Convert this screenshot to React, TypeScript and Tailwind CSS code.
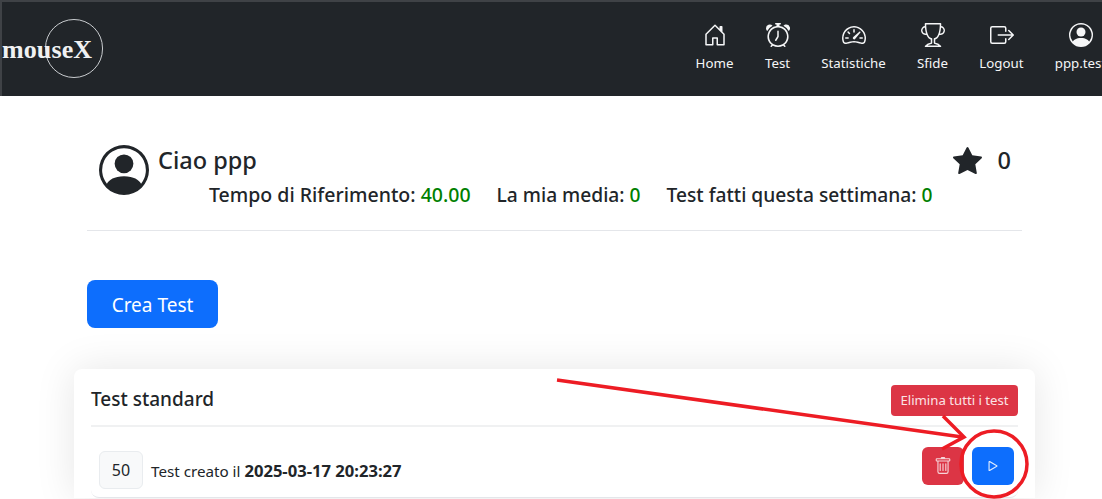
import { BsAlarm, BsBoxArrowRight, BsHouseDoor, BsPersonCircle, BsPlay, BsSpeedometer2, BsStarFill, BsTrash, BsTrophy } from 'react-icons/bs'
import clsx from 'clsx'

const navItems = [
  { label: 'Home', icon: BsHouseDoor, width: 'w-[63px]' },
  { label: 'Test', icon: BsAlarm, width: 'w-[63px]' },
  { label: 'Statistiche', icon: BsSpeedometer2, width: 'w-[89px]' },
  { label: 'Sfide', icon: BsTrophy, width: 'w-[69px]' },
  { label: 'Logout', icon: BsBoxArrowRight, width: 'w-[69px]' },
  { label: 'ppp.test', icon: BsPersonCircle, width: 'w-[89px]' },
]

function Navbar() {
  return (
    <header className="flex h-[96px] shrink-0 items-center justify-between overflow-hidden border-t-2 border-l-2 border-[#3f4246] bg-[#212529]">
      <div className="relative flex h-[59px] w-[100px] items-center">
        <div className="absolute top-[-1px] left-[43px] h-[59px] w-[58px] rounded-full border border-[#c9cccf]" />
        <span className="relative font-['Liberation_Serif',serif] text-[26px] font-bold tracking-[0.1px] text-[#f0f1f2]">mouseX</span>
      </div>
      <nav className="mr-[-23px] flex items-start pb-[4px]">
        {navItems.map(item => (
          <a key={item.label} className={clsx('flex shrink-0 flex-col items-center gap-[7px] text-[13.3px] leading-[18px] text-[#f5f6f7]', item.width)}>
            <item.icon className="size-[24px]" />
            <span>{item.label}</span>
          </a>
        ))}
      </nav>
    </header>
  )
}

function Profile() {
  return (
    <section className="flex h-[135px] items-start border-b border-[#e4e6ea] pt-[49px] pr-[11px] pl-[12px]">
      <BsPersonCircle className="size-[50px] shrink-0 text-[#212529]" />
      <div className="ml-[9px] flex-1">
        <div className="flex items-center justify-between">
          <h1 className="text-[23.5px] leading-[30px] font-medium text-[#212529]">Ciao ppp</h1>
          <div className="flex items-center gap-[16px] text-[#212529]">
            <BsStarFill className="size-[29px]" />
            <span className="text-[23.5px] leading-[30px] font-medium">0</span>
          </div>
        </div>
        <div className="mt-[5px] ml-[51px] flex gap-[26px] text-[19.2px] leading-[30px] font-medium text-[#212529]">
          <span className="text-[19.5px]">Tempo di Riferimento: <span className="text-[#008000]">40.00</span></span>
          <span>La mia media: <span className="text-[#008000]">0</span></span>
          <span>Test fatti questa settimana: <span className="text-[#008000]">0</span></span>
        </div>
      </div>
    </section>
  )
}

function TestCard() {
  return (
    <section className="relative mt-[41px] ml-[-13px] w-[961px] rounded-t-lg bg-white px-[17px] pt-[16px] shadow-[0_0_40px_rgba(0,0,0,0.1)]">
      <h2 className="border-b-2 border-[#f0f1f2] pb-[11px] text-[19px] leading-[29px] font-medium text-[#212529]">Test standard</h2>
      <div className="flex h-[71px] items-start rounded-b-lg border-b border-[#e4e6ea] pr-[4px] pl-[8px]">
        <span className="mt-[24px] flex h-[38px] w-[44px] items-center justify-center rounded-md border border-[#e9ecef] bg-[#f8f9fa] text-[16px] text-[#212529]">50</span>
        <span className="mt-[32px] ml-[8px] text-[15.2px] leading-[24px] text-[#212529]">Test creato il <b className="text-[16.6px]">2025-03-17 20:23:27</b></span>
        <button className="mt-[20px] ml-auto flex h-[38px] w-[42px] items-center justify-center rounded-md bg-[#dc3545] text-[#f6d5d9]">
          <BsTrash className="size-[18px]" />
        </button>
        <button className="mt-[20px] ml-[8px] flex h-[38px] w-[42px] items-center justify-center rounded-md bg-[#0d6efd] text-[#e0ecff]">
          <BsPlay className="size-[18px]" />
        </button>
      </div>
      <div className="absolute top-[16px] right-[17px] flex h-[31px] w-[127px] items-center justify-center rounded-[4px] bg-[#dc3545] text-[13.2px] text-[#fbe3e5]">Elimina tutti i test</div>
    </section>
  )
}

export default function App() {
  return (
    <div className="relative flex h-[499px] w-[1102px] flex-col overflow-hidden bg-white font-['Noto_Sans',sans-serif]">
      <Navbar />
      <main className="pr-[80px] pl-[87px]">
        <Profile />
        <button className="mt-[49px] block h-[48px] w-[131px] rounded-lg bg-[#0d6efd] pt-[2px] text-[19px] text-white">Crea Test</button>
        <TestCard />
      </main>
      {/* red annotation drawn over the screenshot */}
      <svg className="pointer-events-none absolute inset-0" width="1102" height="499" fill="none" stroke="#ed1c24" strokeWidth="3.5">
        <path d="M557 380 L962 437" />
        <path d="M943 416 L964 437 L942 449" />
        <ellipse cx="994" cy="464" rx="33" ry="33" />
      </svg>
    </div>
  )
}
